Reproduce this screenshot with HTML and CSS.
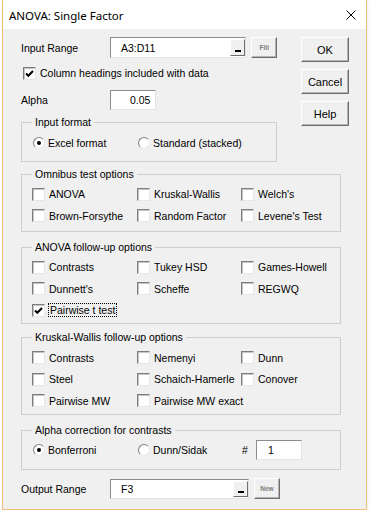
FILE: index.html
```html
<!DOCTYPE html>
<html lang="en">
<head>
  <meta charset="UTF-8"/>
  <title>ANOVA: Single Factor</title>
  <link rel="stylesheet" href="styles.css">
</head>
<body>

  <div class="window">
    <!-- title bar -->
    <div class="titlebar">
      <span class="title">ANOVA: Single Factor</span>
      <svg class="close" width="10" height="10" viewBox="0 0 10 10">
        <path d="M0.5 0.5 L9.5 9.5 M9.5 0.5 L0.5 9.5" stroke="#000" stroke-width="1" fill="none"/>
      </svg>
    </div>

    <div class="client">
      <div class="top">
        <div class="main">
          <div class="row range-row">
            <span class="lbl">Input Range</span>
            <div class="refedit">
              <span class="val">A3:D11</span>
              <span class="collapse"><i></i></span>
            </div>
            <span class="mini">Fill</span>
          </div>

          <div class="check-row">
            <span class="chk on"><svg width="9" height="9" viewBox="0 0 9 9"><path d="M1 4.5 L3.3 6.8 L8 2" stroke="#000" stroke-width="2" fill="none"/></svg></span>
            <span>Column headings included with data</span>
          </div>

          <div class="row alpha-row">
            <span class="lbl">Alpha</span>
            <div class="textbox alpha">0.05</div>
          </div>

          <fieldset class="group format">
            <legend>Input format</legend>
            <div class="opts">
              <div class="opt"><span class="radio on"></span>Excel format</div>
              <div class="opt"><span class="radio"></span>Standard (stacked)</div>
            </div>
          </fieldset>
        </div>

        <div class="buttons">
          <span class="btn">OK</span>
          <span class="btn">Cancel</span>
          <span class="btn">Help</span>
        </div>
      </div>

      <fieldset class="group omnibus">
        <legend>Omnibus test options</legend>
        <div class="opts">
          <div class="opt"><span class="chk"></span>ANOVA</div>
          <div class="opt"><span class="chk"></span>Kruskal-Wallis</div>
          <div class="opt"><span class="chk"></span>Welch's</div>
          <div class="opt"><span class="chk"></span>Brown-Forsythe</div>
          <div class="opt"><span class="chk"></span>Random Factor</div>
          <div class="opt"><span class="chk"></span>Levene's Test</div>
        </div>
      </fieldset>

      <fieldset class="group anova">
        <legend>ANOVA follow-up options</legend>
        <div class="opts">
          <div class="opt"><span class="chk"></span>Contrasts</div>
          <div class="opt"><span class="chk"></span>Tukey HSD</div>
          <div class="opt"><span class="chk"></span>Games-Howell</div>
          <div class="opt"><span class="chk"></span>Dunnett's</div>
          <div class="opt"><span class="chk"></span>Scheffe</div>
          <div class="opt"><span class="chk"></span>REGWQ</div>
          <div class="opt"><span class="chk on"><svg width="9" height="9" viewBox="0 0 9 9"><path d="M1 4.5 L3.3 6.8 L8 2" stroke="#000" stroke-width="2" fill="none"/></svg></span><span class="focus">Pairwise t test</span></div>
        </div>
      </fieldset>

      <fieldset class="group kruskal">
        <legend>Kruskal-Wallis follow-up options</legend>
        <div class="opts">
          <div class="opt"><span class="chk"></span>Contrasts</div>
          <div class="opt"><span class="chk"></span>Nemenyi</div>
          <div class="opt"><span class="chk"></span>Dunn</div>
          <div class="opt"><span class="chk"></span>Steel</div>
          <div class="opt"><span class="chk"></span>Schaich-Hamerle</div>
          <div class="opt"><span class="chk"></span>Conover</div>
          <div class="opt"><span class="chk"></span>Pairwise MW</div>
          <div class="opt"><span class="chk"></span>Pairwise MW exact</div>
        </div>
      </fieldset>

      <fieldset class="group correction">
        <legend>Alpha correction for contrasts</legend>
        <div class="opts">
          <div class="opt"><span class="radio on"></span>Bonferroni</div>
          <div class="opt"><span class="radio"></span>Dunn/Sidak</div>
          <div class="opt"><span class="hash">#</span><div class="textbox count">1</div></div>
        </div>
      </fieldset>

      <div class="row output-row">
        <span class="lbl">Output Range</span>
        <div class="refedit">
          <span class="val">F3</span>
          <span class="collapse"><i></i></span>
        </div>
        <span class="mini">New</span>
      </div>
    </div>
  </div>

</body>
</html>
```

FILE: styles.css
```css
* {
  box-sizing: border-box;
}

body {
  margin: 0;
  background: #fff;
  font-family: "Liberation Sans", Arial, sans-serif;
  font-size: 10.5px;
  color: #000;
}

.window {
  width: 365px;
  height: 510px;
  margin-left: 2px;
  border: 1px solid #efc07a;
  border-top: 0;
  background: #f0f0f0;
  box-shadow: 1px 1px 3px rgba(0, 0, 0, 0.08);
}

/* title bar */
.titlebar {
  height: 29px;
  background: #fff;
  display: flex;
  align-items: center;
  justify-content: space-between;
  padding: 1px 10px 0 6px;
}

.title {
  font-family: "Noto Sans", "Open Sans", sans-serif;
  font-size: 11.5px;
}

/* client area */
.client {
  padding: 8px 17px 0 18px;
}

.top {
  display: flex;
  justify-content: space-between;
}

.main {
  width: 256px;
}

.row {
  display: flex;
  align-items: center;
}

.lbl {
  width: 89px;
  flex: none;
}

.range-row {
  height: 21px;
}

.refedit {
  width: 139px;
  height: 21px;
  background: #fff;
  border: 1px solid;
  border-color: #8c8c8c #e3e3e3 #e3e3e3 #8c8c8c;
  display: flex;
  align-items: center;
  justify-content: space-between;
  padding: 1px 0 1px 10px;
}

.collapse {
  width: 15px;
  height: 17px;
  background: #f0f0f0;
  border: 1px solid;
  border-color: #fff #6e6e6e #6e6e6e #fff;
  display: flex;
  align-items: flex-end;
  justify-content: center;
  padding-bottom: 3px;
}

.collapse i {
  display: block;
  width: 6px;
  height: 2px;
  background: #000;
}

.mini {
  width: 26px;
  height: 21px;
  margin-left: 5px;
  background: #f0f0f0;
  border: 1px solid;
  border-color: #fff #6e6e6e #6e6e6e #fff;
  box-shadow: inset -1px -1px #b4b4b4;
  font-size: 6.5px;
  font-weight: bold;
  color: #7a7a7a;
  display: flex;
  align-items: center;
  justify-content: center;
}

.check-row {
  display: flex;
  align-items: center;
  height: 16px;
  margin-top: 7px;
  padding-left: 2px;
}

.check-row .chk {
  margin-right: 4px;
}

.alpha-row {
  margin-top: 9px;
}

.textbox {
  height: 20px;
  background: #fff;
  border: 1px solid;
  border-color: #8c8c8c #e3e3e3 #e3e3e3 #8c8c8c;
  display: flex;
  align-items: center;
}

.alpha {
  width: 46px;
  padding-left: 19px;
}

/* buttons */
.buttons {
  display: flex;
  flex-direction: column;
  gap: 7px;
}

.btn {
  width: 48px;
  height: 25px;
  background: #f0f0f0;
  border: 1px solid;
  border-color: #fff #6e6e6e #6e6e6e #fff;
  box-shadow: inset -1px -1px #b4b4b4;
  font-size: 11px;
  display: flex;
  align-items: center;
  justify-content: center;
}

/* group boxes */
.group {
  margin: 9px 0 0;
  width: 320px;
  border: 1px solid #cdcdcd;
  padding: 3px 10px 2px;
}

.group legend {
  padding: 0 3px;
  line-height: 13px;
}

.group.format {
  width: 256px;
  margin-top: 6px;
  padding-bottom: 7px;
}

.group.omnibus {
  margin-top: 6px;
  padding-bottom: 4px;
}

.group.kruskal {
  margin-top: 7px;
}

.opts {
  display: grid;
  grid-template-columns: 105px 104px auto;
}

.format .opts {
  grid-template-columns: 105px auto;
}

.opt {
  display: flex;
  align-items: center;
  height: 21.5px;
  white-space: nowrap;
}

.opt .chk {
  margin-right: 4px;
}

.chk {
  width: 13px;
  height: 13px;
  flex: none;
  background: #fff;
  border: 1px solid;
  border-color: #7e7e7e #e6e6e6 #e6e6e6 #7e7e7e;
  box-shadow: inset 1px 1px #c4c4c4;
  display: flex;
  align-items: center;
  justify-content: center;
}

.radio {
  width: 12px;
  height: 12px;
  flex: none;
  margin: 0 3px 0 1px;
  border-radius: 50%;
  background: #fff;
  border: 1px solid;
  border-color: #7e7e7e #e6e6e6 #e6e6e6 #7e7e7e;
  display: flex;
  align-items: center;
  justify-content: center;
}

.radio.on::after {
  content: "";
  width: 4px;
  height: 4px;
  border-radius: 50%;
  background: #000;
}

.focus {
  outline: 1px dotted #000;
  padding: 0 1px;
}

.hash {
  width: 15px;
  padding-left: 1px;
}

.count {
  width: 46px;
  padding-left: 11px;
}

.correction {
  padding-bottom: 8px;
}

.output-row {
  margin-top: 8px;
}

.output-row .refedit {
  height: 20px;
}

.output-row .collapse {
  height: 16px;
}
```
